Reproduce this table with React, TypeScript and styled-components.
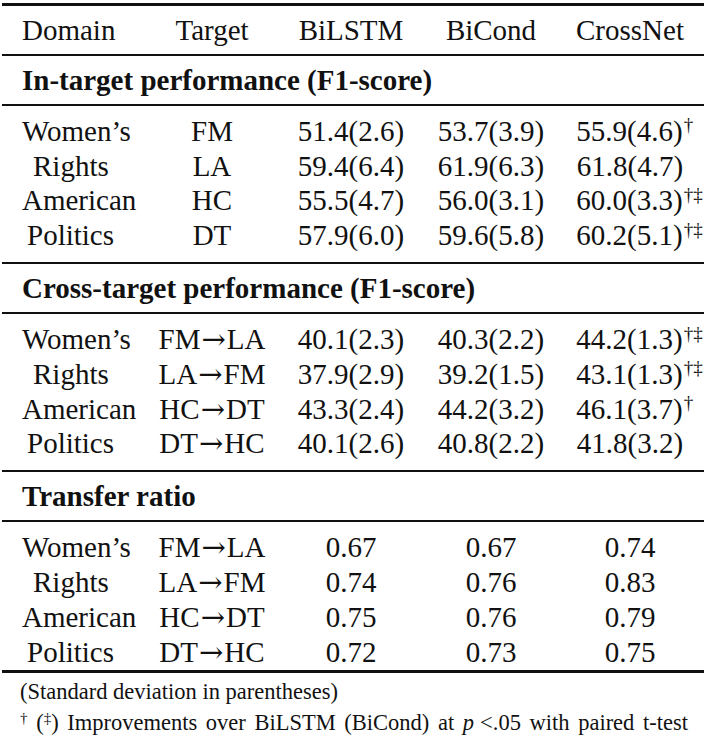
import styled, { createGlobalStyle } from "styled-components"

const GlobalStyle = createGlobalStyle`
  body {
    margin: 0;
    background: #fff;
    color: #111;
    font-family: "Liberation Serif", "Times New Roman", serif;
  }
`

const Page = styled.div`
  width: 707px;
  padding: 3px 3px 0 2px;
  box-sizing: border-box;
`

const Rule = styled.div<{ $thick?: boolean }>`
  height: ${(p) => (p.$thick ? 3 : 2)}px;
  background: #111;
`

const Grid = styled.div`
  display: grid;
  grid-template-columns: 146px 128px 150px 130px 148px;
  align-items: center;
  font-size: 29px;
  line-height: 1;
`

const HeaderRow = styled(Grid)`
  height: 48px;
`

const DataBlock = styled.div<{ $last?: boolean }>`
  padding: 8px 0 ${(p) => (p.$last ? 0 : 9)}px;
`

const DataRow = styled(Grid)`
  height: 34.8px;
`

const Cell = styled.div<{ $left?: boolean; $indent?: number }>`
  text-align: ${(p) => (p.$left ? "left" : "center")};
  padding-left: ${(p) => (p.$left ? 20 + (p.$indent ?? 0) : 0)}px;
  white-space: nowrap;
`

const SectionTitle = styled.div`
  height: 48px;
  display: flex;
  align-items: center;
  padding-left: 20px;
  font-size: 29px;
  font-weight: bold;
`

const Sup = styled.span`
  display: inline-block;
  width: 0;
  margin-left: 1px;
  font-size: 19px;
  vertical-align: 0.5em;
  line-height: 0;
  white-space: nowrap;
`

const Arrow = styled.span`
  font-family: "DejaVu Serif", serif;
  font-size: 29px;
  margin: 0 1px;
`

const Notes = styled.div`
  padding: 3px 0 0 18px;
  font-size: 22.5px;
  line-height: 31px;
`

const NoteLine = styled.div<{ $spread?: boolean }>`
  white-space: nowrap;
  word-spacing: ${(p) => (p.$spread ? 3 : 0)}px;
`

const NoteSup = styled.span`
  font-size: 15px;
  vertical-align: 0.5em;
  line-height: 0;
`

const MathVar = styled.i`
  margin-right: 6px;
`

type Row = [string, string, string, string, string, string?]

const indents: Record<string, number> = {
  "Women’s": 0,
  Rights: 11,
  American: 0,
  Politics: 5,
}

const inTarget: Row[] = [
  ["Women’s", "FM", "51.4(2.6)", "53.7(3.9)", "55.9(4.6)", "†"],
  ["Rights", "LA", "59.4(6.4)", "61.9(6.3)", "61.8(4.7)"],
  ["American", "HC", "55.5(4.7)", "56.0(3.1)", "60.0(3.3)", "†‡"],
  ["Politics", "DT", "57.9(6.0)", "59.6(5.8)", "60.2(5.1)", "†‡"],
]

const crossTarget: Row[] = [
  ["Women’s", "FM>LA", "40.1(2.3)", "40.3(2.2)", "44.2(1.3)", "†‡"],
  ["Rights", "LA>FM", "37.9(2.9)", "39.2(1.5)", "43.1(1.3)", "†‡"],
  ["American", "HC>DT", "43.3(2.4)", "44.2(3.2)", "46.1(3.7)", "†"],
  ["Politics", "DT>HC", "40.1(2.6)", "40.8(2.2)", "41.8(3.2)"],
]

const transfer: Row[] = [
  ["Women’s", "FM>LA", "0.67", "0.67", "0.74"],
  ["Rights", "LA>FM", "0.74", "0.76", "0.83"],
  ["American", "HC>DT", "0.75", "0.76", "0.79"],
  ["Politics", "DT>HC", "0.72", "0.73", "0.75"],
]

function Target({ value }: { value: string }) {
  const [from, to] = value.split(">")
  if (!to) return <>{from}</>
  return (
    <>
      {from}
      <Arrow>→</Arrow>
      {to}
    </>
  )
}

function Block({ rows, last }: { rows: Row[]; last?: boolean }) {
  return (
    <DataBlock $last={last}>
      {rows.map(([domain, target, a, b, c, mark]) => (
        <DataRow key={domain}>
          <Cell $left $indent={indents[domain]}>
            {domain}
          </Cell>
          <Cell>
            <Target value={target} />
          </Cell>
          <Cell>{a}</Cell>
          <Cell>{b}</Cell>
          <Cell>
            {c}
            {mark && <Sup>{mark}</Sup>}
          </Cell>
        </DataRow>
      ))}
    </DataBlock>
  )
}

function App() {
  return (
    <Page>
      <GlobalStyle />
      <Rule $thick />
      <HeaderRow>
        <Cell $left>Domain</Cell>
        <Cell>Target</Cell>
        <Cell>BiLSTM</Cell>
        <Cell>BiCond</Cell>
        <Cell>CrossNet</Cell>
      </HeaderRow>
      <Rule />
      <SectionTitle>In-target performance (F1-score)</SectionTitle>
      <Rule />
      <Block rows={inTarget} />
      <Rule />
      <SectionTitle>Cross-target performance (F1-score)</SectionTitle>
      <Rule />
      <Block rows={crossTarget} />
      <Rule />
      <SectionTitle>Transfer ratio</SectionTitle>
      <Rule />
      <Block rows={transfer} last />
      <Rule $thick />
      <Notes>
        <NoteLine>(Standard deviation in parentheses)</NoteLine>
        <NoteLine $spread>
          <NoteSup>†</NoteSup> (<NoteSup>‡</NoteSup>) Improvements over BiLSTM (BiCond) at{" "}
          <MathVar>p</MathVar>&lt;.05 with paired t-test
        </NoteLine>
      </Notes>
    </Page>
  )
}

export default App
